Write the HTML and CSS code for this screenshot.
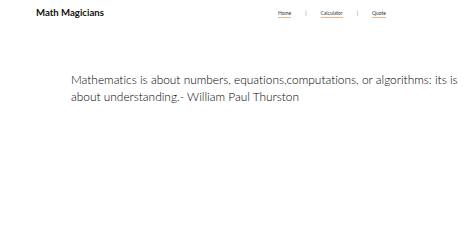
FILE: index.html
```html
<!DOCTYPE html>
<html lang="en">
<head>
    <meta charset="UTF-8">
    <meta name="viewport" content="width=device-width, initial-scale=1.0">
    <title>Math Magicians</title>
    <link rel="stylesheet" href="styles.css">
</head>
<body>
    <header class="navbar">
        <h1 class="logo">Math Magicians</h1>
        <ul class="nav_links">
            <li><a href="#">Home</a></li>
            <li class="sep">|</li>
            <li><a href="#">Calculator</a></li>
            <li class="sep">|</li>
            <li><a href="#">Quote</a></li>
        </ul>
    </header>
    <main class="quote_box">
        <p class="quote">Mathematics is about numbers, equations,computations, or algorithms: its is about understanding.- William Paul Thurston</p>
    </main>
</body>
</html>
```

FILE: styles.css
```css
*{
    margin: 0;
    padding: 0;
    box-sizing: border-box;
}
body{
    background: #fff;
    font-family: Lato, "Open Sans", sans-serif;
    color: #222;
}
.navbar{
    display: flex;
    align-items: center;
    justify-content: space-between;
    height: 25px;
    padding: 0 88px 0 36px;
}
.logo{
    font-size: 9.6px;
    font-weight: 700;
    color: #111;
}
.nav_links{
    display: flex;
    list-style: none;
    gap: 14px;
    font-size: 5px;
}
.nav_links a{
    color: #333;
    text-decoration: none;
    border-bottom: 1px solid #f0b48c;
    padding-bottom: 1px;
}
.sep{
    color: #666;
}
.quote_box{
    padding: 46px 6px 0 71px;
}
.quote{
    font-size: 11.9px;
    font-weight: 300;
    line-height: 17px;
    color: #000;
    font-variant-ligatures: none;
}
```
